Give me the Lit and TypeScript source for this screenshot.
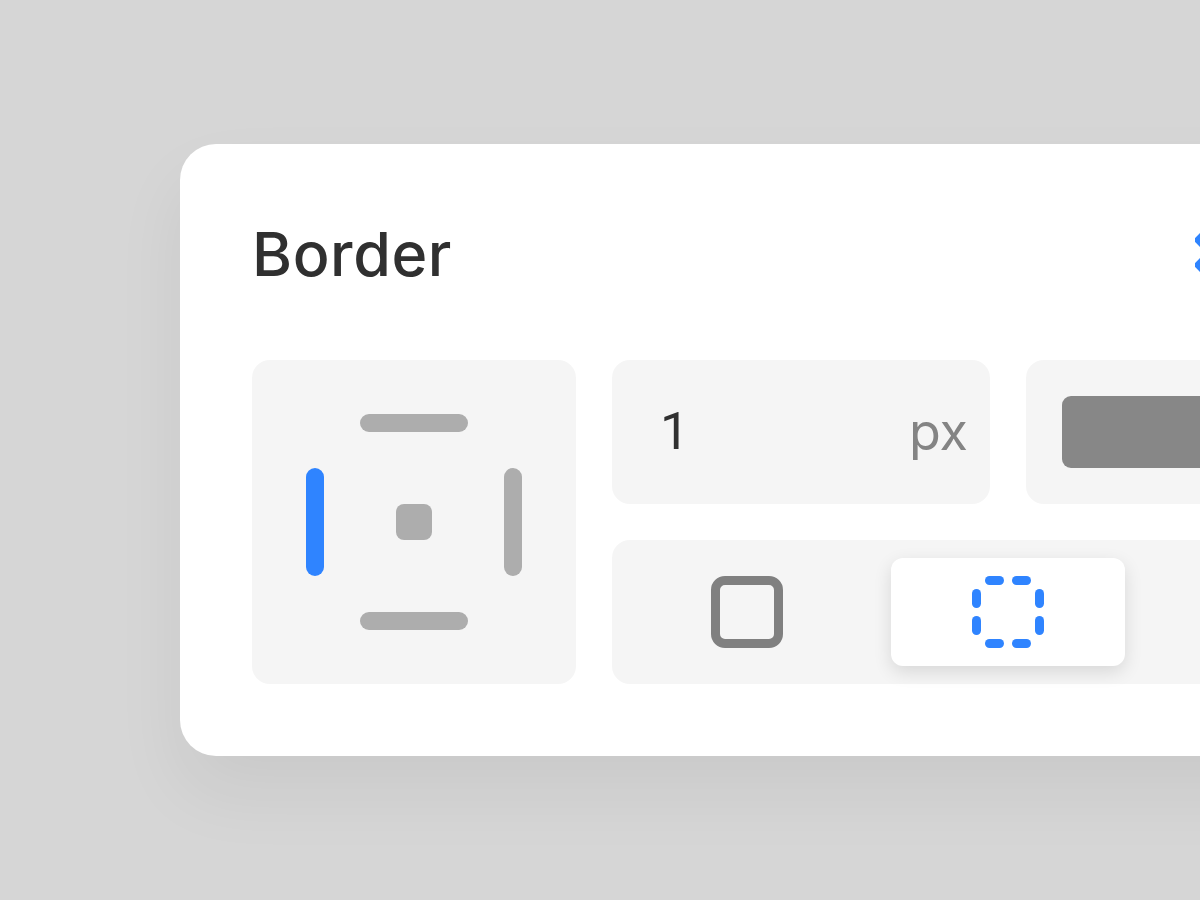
import { LitElement, css, html, svg } from "lit";
import { customElement } from "lit/decorators.js";

const DASHES = [
  [13, 0, 19, 9],
  [40, 0, 19, 9],
  [13, 63, 19, 9],
  [40, 63, 19, 9],
  [0, 13, 9, 19],
  [0, 40, 9, 19],
  [63, 13, 9, 19],
  [63, 40, 9, 19],
];

@customElement("app-root")
export class AppRoot extends LitElement {
  static styles = css`
    :host {
      display: block;
      height: 900px;
      width: 1200px;
      overflow: hidden;
      background: #d6d6d6;
      font-family: Inter, "Liberation Sans", sans-serif;
    }
    .page {
      padding: 144px 0 0 180px;
    }
    .card {
      box-sizing: border-box;
      width: 1296px;
      height: 612px;
      padding: 72px;
      background: #fff;
      border-radius: 36px;
      box-shadow: 0 36px 72px rgba(0, 0, 0, 0.06);
    }
    .header {
      display: flex;
      justify-content: space-between;
      align-items: center;
      height: 72px;
      margin-bottom: 72px;
    }
    h1 {
      margin: 0;
      padding-top: 3px;
      font-size: 61px;
      font-weight: 500;
      letter-spacing: 0.6px;
      line-height: 72px;
      color: #303030;
    }
    .actions {
      display: block;
      width: 209px;
      height: 72px;
    }
    .body {
      display: grid;
      grid-template-columns: 324px 792px;
      gap: 36px;
    }
    .panel {
      background: #f5f5f5;
      border-radius: 18px;
    }
    .sides {
      display: grid;
      grid-template-columns: 18px 108px 18px;
      grid-template-rows: 18px 108px 18px;
      gap: 36px;
      justify-content: center;
      align-content: center;
      height: 324px;
    }
    .side {
      background: #adadad;
      border-radius: 9px;
    }
    .side.on {
      background: #2f84ff;
    }
    .top {
      grid-area: 1 / 2;
    }
    .left {
      grid-area: 2 / 1;
    }
    .right {
      grid-area: 2 / 3;
    }
    .bottom {
      grid-area: 3 / 2;
    }
    .center {
      grid-area: 2 / 2;
      place-self: center;
      width: 36px;
      height: 36px;
      background: #adadad;
      border-radius: 8px;
    }
    .controls {
      display: flex;
      flex-direction: column;
      gap: 36px;
    }
    .row {
      display: grid;
      grid-template-columns: 378px 378px;
      gap: 36px;
    }
    .field {
      display: flex;
      justify-content: space-between;
      align-items: center;
      height: 144px;
      box-sizing: border-box;
      padding: 0 22px 0 48px;
      font-size: 52px;
      line-height: 72px;
    }
    .value {
      font-family: Roboto, Inter, sans-serif;
      color: #303030;
    }
    .unit {
      color: #848484;
    }
    .swatch-wrap {
      padding: 36px;
      height: 144px;
      box-sizing: border-box;
    }
    .swatch {
      height: 72px;
      background: #878787;
      border-radius: 9px;
    }
    .styles {
      display: flex;
      gap: 27px;
      padding: 18px;
    }
    .option {
      display: flex;
      justify-content: center;
      align-items: center;
      width: 234px;
      height: 108px;
      border-radius: 12px;
    }
    .option.active {
      background: #fff;
      box-shadow: 0 6px 18px rgba(0, 0, 0, 0.12);
    }
    .solid {
      box-sizing: border-box;
      width: 72px;
      height: 72px;
      border: 9px solid #808080;
      border-radius: 14px;
    }
    svg {
      display: block;
    }
  `;

  render() {
    return html`
      <div class="page">
        <section class="card">
          <header class="header">
            <h1>Border</h1>
            <svg class="actions" viewBox="0 0 209 72">
              <rect x="3" y="12" width="24" height="24" rx="4" transform="rotate(45 15 24)" fill="#2f84ff" />
              <rect x="3" y="37" width="24" height="24" rx="4" transform="rotate(45 15 49)" fill="#2f84ff" />
            </svg>
          </header>
          <div class="body">
            <div class="panel sides">
              <div class="side top"></div>
              <div class="side left on"></div>
              <div class="center"></div>
              <div class="side right"></div>
              <div class="side bottom"></div>
            </div>
            <div class="controls">
              <div class="row">
                <div class="panel field">
                  <span class="value">1</span>
                  <span class="unit">px</span>
                </div>
                <div class="panel swatch-wrap"><div class="swatch"></div></div>
              </div>
              <div class="panel styles">
                <div class="option"><div class="solid"></div></div>
                <div class="option active">
                  <svg width="72" height="72" viewBox="0 0 72 72">
                    ${DASHES.map(
                      ([x, y, w, h]) =>
                        svg`<rect x=${x} y=${y} width=${w} height=${h} rx="4.5" fill="#2f84ff" />`
                    )}
                  </svg>
                </div>
                <div class="option"></div>
              </div>
            </div>
          </div>
        </section>
      </div>
    `;
  }
}
